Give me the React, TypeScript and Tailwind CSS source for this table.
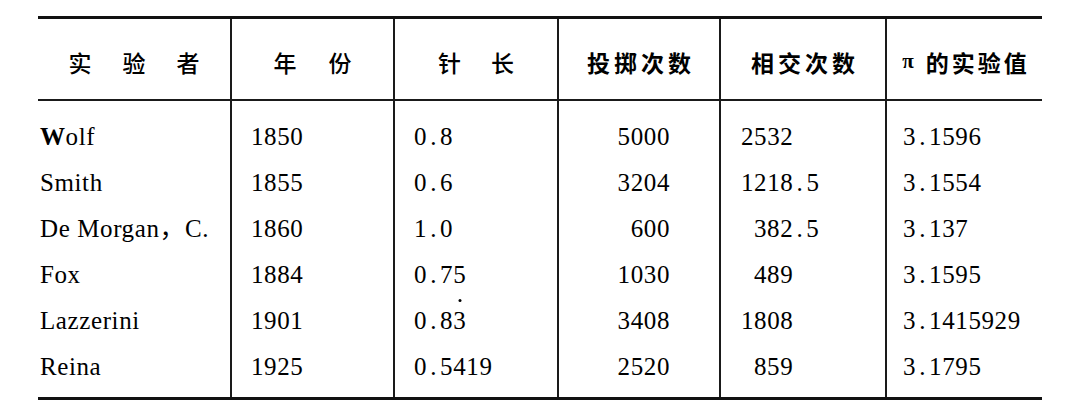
import React from "react"

const rows = [
  { name: "Wolf", year: "1850", len: "0.8", throws: "5000", hits: "2532", pi: "3.1596" },
  { name: "Smith", year: "1855", len: "0.6", throws: "3204", hits: "1218.5", pi: "3.1554" },
  { name: "De Morgan，C.", year: "1860", len: "1.0", throws: "600", hits: "382.5", pi: "3.137" },
  { name: "Fox", year: "1884", len: "0.75", throws: "1030", hits: "489", pi: "3.1595" },
  { name: "Lazzerini", year: "1901", len: "0.83", throws: "3408", hits: "1808", pi: "3.1415929" },
  { name: "Reina", year: "1925", len: "0.5419", throws: "2520", hits: "859", pi: "3.1795" },
]

// decimal point set wide, as in the printed table
function Num({ v, repeat }: { v: string; repeat?: boolean }) {
  const [a, b] = v.split(".")
  if (b === undefined) return <>{v}</>
  return (
    <>
      {a}
      <span className="inline-block w-[13px] text-center">.</span>
      {repeat ? (
        <>
          {b.slice(0, -1)}
          <span className="relative">
            {b.slice(-1)}
            <span className="absolute left-1/2 top-[-8px] h-[3px] w-[3px] -translate-x-1/2 rounded-full bg-black" />
          </span>
        </>
      ) : (
        b
      )}
    </>
  )
}

function Spaced({ text, gap }: { text: string; gap: string }) {
  return (
    <div className={`flex h-[80px] items-center justify-center pt-[6px] ${gap}`}>
      {text.split("").map((c, i) => (
        <span key={i}>{c}</span>
      ))}
    </div>
  )
}

const line = "border-l-2 border-[#1a1a1a]"

export default function App() {
  return (
    <div className="h-[419px] w-[1080px] bg-white text-black">
      <table className="ml-[38px] w-[1004px] translate-y-[16px] table-fixed border-separate border-spacing-0 border-y-[3px] border-[#111]">
        <colgroup>
          <col className="w-[192px]" />
          <col className="w-[163px]" />
          <col className="w-[164px]" />
          <col className="w-[162px]" />
          <col className="w-[166px]" />
          <col className="w-[157px]" />
        </colgroup>
        <thead className="font-['Noto_Sans_CJK_SC',sans-serif] text-[23px] whitespace-nowrap">
          <tr>
            <th className="border-b-2 border-[#1a1a1a] p-0 font-medium">
              <Spaced text="实验者" gap="gap-[31px]" />
            </th>
            <th className={`${line} border-b-2 p-0 font-medium`}>
              <Spaced text="年份" gap="gap-[32px]" />
            </th>
            <th className={`${line} border-b-2 p-0 font-medium`}>
              <Spaced text="针长" gap="gap-[30px]" />
            </th>
            <th className={`${line} border-b-2 p-0 font-bold`}>
              <Spaced text="投掷次数" gap="gap-[4px]" />
            </th>
            <th className={`${line} border-b-2 p-0 font-bold`}>
              <Spaced text="相交次数" gap="gap-[4px]" />
            </th>
            <th className={`${line} border-b-2 p-0 font-bold`}>
              <div className="flex h-[80px] items-center justify-center gap-[3px] pt-[6px]">
                <span className="mr-[9px] font-['Liberation_Serif',serif] text-[21px] font-bold">π</span>
                <span>的</span>
                <span>实</span>
                <span>验</span>
                <span>值</span>
              </div>
            </th>
          </tr>
        </thead>
        <tbody className="font-['Liberation_Serif','Noto_Sans_CJK_SC',serif] text-[25px] tracking-[0.6px]">
          {rows.map((r, i) => {
            const pad = i === 0 ? "pt-[13px]" : i === rows.length - 1 ? "pb-[7px]" : ""
            const indent = r.hits.split(".")[0].length < 4
            return (
              <tr key={r.name}>
                <td className={`p-0 ${pad}`}>
                  <div className="flex h-[46px] items-center pl-[2px] whitespace-nowrap">
                    {r.name === "Wolf" ? (
                      <>
                        <span className="font-bold">W</span>olf
                      </>
                    ) : (
                      r.name
                    )}
                  </div>
                </td>
                <td className={`${line} p-0 ${pad}`}>
                  <div className="flex h-[46px] items-center pl-[19px]">{r.year}</div>
                </td>
                <td className={`${line} p-0 ${pad}`}>
                  <div className="flex h-[46px] items-center pl-[19px]">
                    <span>
                      <Num v={r.len} repeat={r.len === "0.83"} />
                    </span>
                  </div>
                </td>
                <td className={`${line} p-0 ${pad}`}>
                  <div className="flex h-[46px] items-center justify-end pr-[49px]">{r.throws}</div>
                </td>
                <td className={`${line} p-0 ${pad}`}>
                  <div className={`flex h-[46px] items-center ${indent ? "pl-[33px]" : "pl-[20px]"}`}>
                    <span>
                      <Num v={r.hits} />
                    </span>
                  </div>
                </td>
                <td className={`${line} p-0 ${pad}`}>
                  <div className="flex h-[46px] items-center pl-[16px]">
                    <span>
                      <Num v={r.pi} />
                    </span>
                  </div>
                </td>
              </tr>
            )
          })}
        </tbody>
      </table>
    </div>
  )
}
